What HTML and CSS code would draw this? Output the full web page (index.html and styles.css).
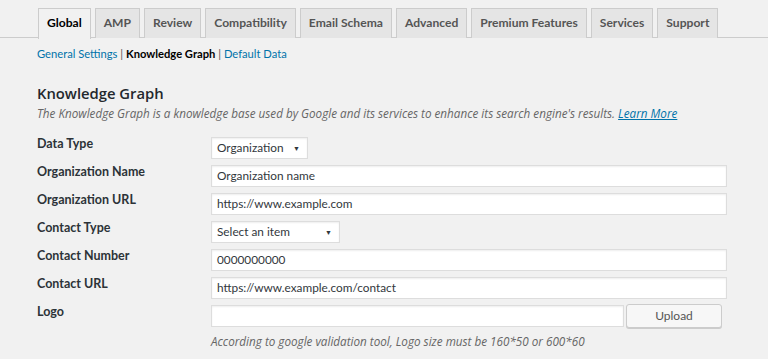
FILE: index.html
```html
<!DOCTYPE html>
<html>
<head>
<meta charset="utf-8">
<link rel="stylesheet" href="styles.css">
</head>
<body>
<div class="wrap">
  <nav class="tabs">
    <a class="tab active">Global</a>
    <a class="tab">AMP</a>
    <a class="tab">Review</a>
    <a class="tab">Compatibility</a>
    <a class="tab">Email Schema</a>
    <a class="tab">Advanced</a>
    <a class="tab">Premium Features</a>
    <a class="tab">Services</a>
    <a class="tab">Support</a>
  </nav>
  <div class="content">
    <div class="subnav"><a class="link">General Settings</a> | <b>Knowledge Graph</b> | <a class="link">Default Data</a></div>
    <h2 class="title">Knowledge Graph</h2>
    <p class="desc">The Knowledge Graph is a knowledge base used by Google and its services to enhance its search engine's results. <a class="link under">Learn More</a></p>
    <div class="form">
      <div class="label">Data Type</div>
      <div class="field"><div class="select sel-org"><span>Organization</span><span class="arrow">▼</span></div></div>
      <div class="label">Organization Name</div>
      <div class="field"><div class="input">Organization name</div></div>
      <div class="label">Organization URL</div>
      <div class="field"><div class="input">https://www.example.com</div></div>
      <div class="label">Contact Type</div>
      <div class="field"><div class="select sel-item"><span>Select an item</span><span class="arrow">▼</span></div></div>
      <div class="label">Contact Number</div>
      <div class="field"><div class="input">0000000000</div></div>
      <div class="label">Contact URL</div>
      <div class="field"><div class="input">https://www.example.com/contact</div></div>
      <div class="label">Logo</div>
      <div class="field upload-row"><div class="input logo"></div><div class="button">Upload</div></div>
      <div></div>
      <div class="note">According to google validation tool, Logo size must be 160*50 or 600*60</div>
    </div>
  </div>
</div>
</body>
</html>
```
FILE: styles.css
```css
* { box-sizing: border-box; }
html, body { margin: 0; padding: 0; background: #f1f1f1; }
body {
  font-family: "Lato", "Open Sans", sans-serif;
  color: #23282d;
  width: 768px;
  height: 359px;
  overflow: hidden;
}
.wrap { padding-top: 8px; }
.tabs {
  display: flex;
  gap: 4px;
  padding-left: 38px;
  border-bottom: 1px solid #ccc;
  height: 30px;
}
.tab {
  display: block;
  flex-shrink: 0;
  white-space: nowrap;
  height: 30px;
  padding: 0 8px;
  line-height: 28px;
  font-size: 12.1px;
  font-weight: 700;
  color: #555;
  background: #e5e5e5;
  border: 1px solid #ccc;
  border-bottom: none;
}
.tab.active {
  background: #f1f1f1;
  color: #000;
  height: 31px;
}
.content { padding-left: 37px; }
.subnav {
  margin-top: 8px;
  font-size: 11.2px;
  line-height: 16px;
  color: #555;
}
.subnav b { color: #000; font-weight: 700; }
.link { color: #0073aa; }
.under { text-decoration: underline; }
.title {
  margin: 21px 0 0;
  font-family: "Open Sans", sans-serif;
  font-size: 14.8px;
  font-weight: 600;
  line-height: 20px;
  color: #23282d;
}
.desc {
  margin: 2px 0 0;
  font-family: "Open Sans", sans-serif;
  font-size: 11.7px;
  font-style: italic;
  color: #666;
  line-height: 16px;
}
.form {
  margin-top: 16px;
  display: grid;
  grid-template-columns: 174px 516px;
  row-gap: 6px;
}
.label {
  font-size: 12.5px;
  font-weight: 700;
  line-height: 16px;
  margin-top: -1px;
  color: #2c3338;
}
.field { display: flex; }
.input, .select {
  height: 22px;
  background: #fff;
  border: 1px solid #ddd;
  box-shadow: inset 0 1px 2px rgba(0,0,0,0.07);
  font-size: 11.8px;
  line-height: 20px;
  padding: 0 5px;
  color: #32373c;
}
.input { width: 516px; }
.select {
  display: flex;
  justify-content: space-between;
  padding-right: 7px;
}
.sel-org { width: 97px; }
.sel-item { width: 129px; }
.arrow { font-size: 7px; line-height: 20px; }
.upload-row { gap: 2px; }
.input.logo { width: 413px; }
.button {
  width: 96px;
  height: 24px;
  margin-top: -1px;
  background: #f7f7f7;
  border: 1px solid #ccc;
  border-radius: 3px;
  box-shadow: 0 1px 0 #ccc;
  font-size: 12px;
  line-height: 22px;
  text-align: center;
  color: #555;
}
.note {
  margin-top: -1px;
  font-family: "Open Sans", sans-serif;
  font-size: 11.7px;
  font-style: italic;
  color: #666;
  line-height: 16px;
}
```
